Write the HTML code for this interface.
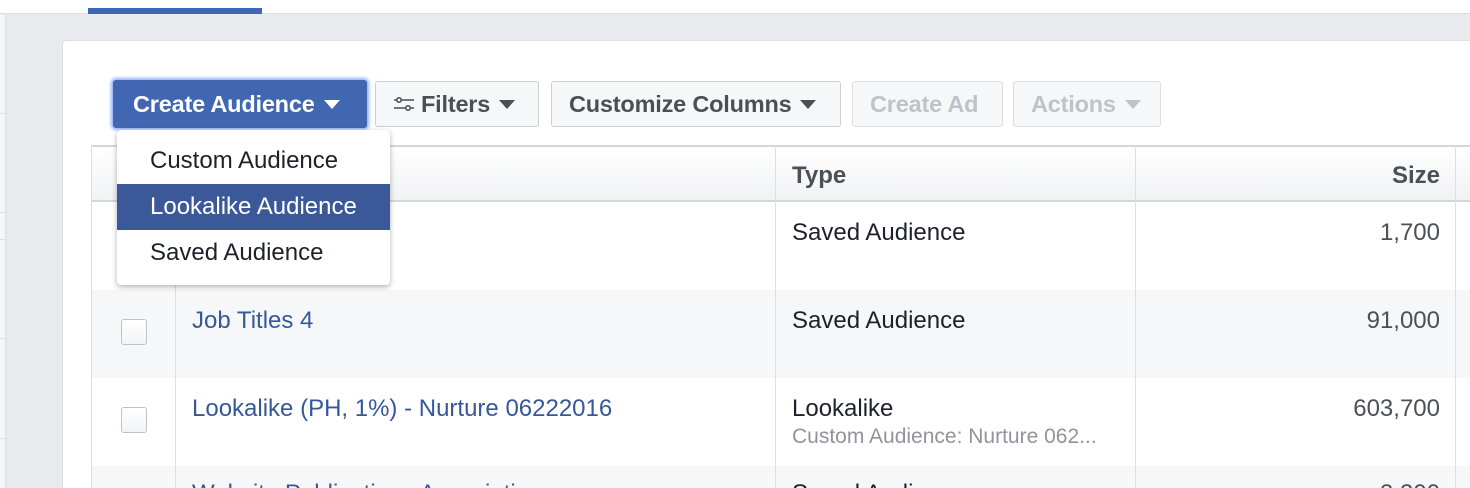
<!DOCTYPE html>
<html style="overflow:hidden;width:1470px;height:488px"><head><style>
*{margin:0;padding:0;box-sizing:border-box}
body{width:1470px;height:488px;overflow:hidden;background:#e9eaed;font-family:"Liberation Sans",Arial,sans-serif;position:relative}
.abs{position:absolute}
.btn{position:absolute;top:81px;height:46px;border:1px solid #ccd0d5;border-radius:3px;background:#f6f7f9;font-weight:bold;font-size:23.5px;color:#4b4f56;line-height:44px;padding-left:17px;white-space:nowrap;letter-spacing:-0.2px}
.tri{display:inline-block;width:0;height:0;border-left:8px solid transparent;border-right:8px solid transparent;border-top:9px solid currentColor;vertical-align:middle;margin-left:9px;margin-top:-3px}
.dis{color:#bec3c9;border-color:#dddfe2}
.cell{position:absolute;font-size:24px;color:#1d2129;white-space:nowrap;letter-spacing:0}
.link{color:#365899}
.vl{position:absolute;width:1px;background:#dddfe2}
.cb{position:absolute;left:121px;width:26px;height:26px;border:1px solid #bec3c9;border-radius:3px;background:linear-gradient(#fff,#f3f4f6)}
</style></head><body>
<div class="abs" style="left:0;top:0;width:1470px;height:14px;background:#fff;border-bottom:1px solid #dddfe2"></div>
<div class="abs" style="left:88px;top:8px;width:174px;height:6px;background:#4267b2"></div>
<div class="abs" style="left:0;top:15px;width:6px;height:473px;background:#f6f7f9;border-right:1px solid #dddfe2"></div>
<div class="abs" style="left:0;top:113px;width:6px;height:1px;background:#dddfe2"></div>
<div class="abs" style="left:0;top:212px;width:6px;height:1px;background:#dddfe2"></div>
<div class="abs" style="left:0;top:239px;width:6px;height:1px;background:#dddfe2"></div>
<div class="abs" style="left:0;top:338px;width:6px;height:1px;background:#dddfe2"></div>
<div class="abs" style="left:0;top:438px;width:6px;height:1px;background:#dddfe2"></div>
<div class="abs" style="left:62px;top:40px;width:1420px;height:448px;background:#fff;border:1px solid #dddfe2;border-bottom:none;border-radius:4px 4px 0 0"></div>

<div class="abs" style="left:91px;top:145px;width:1380px;height:57px;background:linear-gradient(#fff,#f1f2f4);border-top:2px solid #d3d6db;border-bottom:2px solid #d3d6db;border-left:1px solid #dddfe2"></div>
<div class="abs" style="left:91px;top:202px;width:1380px;height:88px;background:#fff"></div>
<div class="abs" style="left:91px;top:290px;width:1380px;height:88px;background:#f6f7f9"></div>
<div class="abs" style="left:91px;top:378px;width:1380px;height:88px;background:#fff"></div>
<div class="abs" style="left:91px;top:466px;width:1380px;height:22px;background:#f6f7f9"></div>
<div class="vl" style="left:91px;top:145px;height:343px"></div>
<div class="vl" style="left:175px;top:145px;height:343px"></div>
<div class="vl" style="left:775px;top:145px;height:343px"></div>
<div class="vl" style="left:1135px;top:145px;height:343px"></div>
<div class="vl" style="left:1455px;top:145px;height:343px"></div>
<div class="cell" style="left:792px;top:162px;font-weight:bold;color:#4b4f56">Type</div>
<div class="cell" style="left:1300px;width:140px;text-align:right;top:162px;font-weight:bold;color:#4b4f56">Size</div>

<div class="cell" style="left:792px;top:219px">Saved Audience</div>
<div class="cell" style="left:1200px;width:240px;text-align:right;top:219px;color:#4b4f56">1,700</div>

<div class="cb" style="top:319px"></div>
<div class="cell link" style="left:192px;top:307px">Job Titles 4</div>
<div class="cell" style="left:792px;top:307px">Saved Audience</div>
<div class="cell" style="left:1200px;width:240px;text-align:right;top:307px;color:#4b4f56">91,000</div>

<div class="cb" style="top:407px"></div>
<div class="cell link" style="left:192px;top:395px">Lookalike (PH, 1%) - Nurture 06222016</div>
<div class="cell" style="left:792px;top:395px">Lookalike</div>
<div class="cell" style="left:792px;top:425px;font-size:21px;color:#90949c">Custom Audience: Nurture 062...</div>
<div class="cell" style="left:1200px;width:240px;text-align:right;top:395px;color:#4b4f56">603,700</div>
<div class="cell link" style="left:192px;top:480px">Website Publications Association</div>
<div class="cell" style="left:792px;top:480px">Saved Audience</div>
<div class="cell" style="left:1200px;width:240px;text-align:right;top:480px;color:#4b4f56">3,300</div>

<div class="btn" style="left:113px;top:80px;width:254px;height:48px;line-height:46px;background:#4267b2;border-color:#4267b2;color:#fff;box-shadow:0 0 3px 2px #8fb0ff;padding-left:19px">Create Audience<span class="tri"></span></div>
<div class="btn" style="left:375px;width:164px">
<svg width="22" height="16" viewBox="0 0 22 16" style="vertical-align:middle;margin-top:-4px;margin-right:6px"><g stroke="#4b4f56" stroke-width="1.6" fill="#fff"><line x1="1" y1="4" x2="21" y2="4"/><line x1="1" y1="12" x2="21" y2="12"/><circle cx="6" cy="4" r="2.2"/><circle cx="15" cy="12" r="2.2"/></g></svg>Filters<span class="tri"></span></div>
<div class="btn" style="left:551px;width:290px">Customize Columns<span class="tri"></span></div>
<div class="btn dis" style="left:852px;width:151px">Create Ad</div>
<div class="btn dis" style="left:1013px;width:148px">Actions<span class="tri"></span></div>

<div class="abs" style="left:117px;top:130px;width:273px;height:155px;background:#fff;border-radius:4px;box-shadow:0 2px 6px rgba(0,0,0,.3)"></div>
<div class="abs" style="left:117px;top:184px;width:273px;height:46px;background:#3b5998"></div>
<div class="cell" style="left:150px;top:147px">Custom Audience</div>
<div class="cell" style="left:150px;top:193px;color:#fff">Lookalike Audience</div>
<div class="cell" style="left:150px;top:239px">Saved Audience</div>
</body></html>
